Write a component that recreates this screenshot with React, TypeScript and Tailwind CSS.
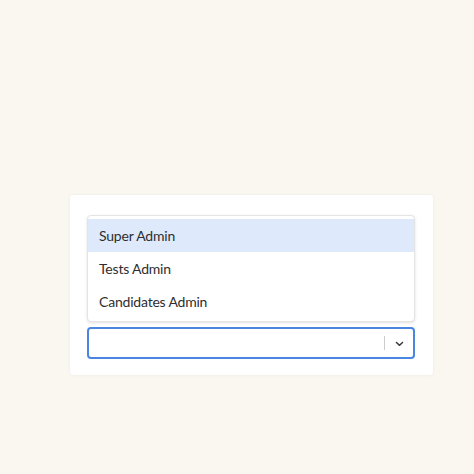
import React from "react";

export default function App() {
  const options = ["Super Admin", "Tests Admin", "Candidates Admin"];
  return (
    <div
      className="w-[474px] h-[474px] bg-[#faf6f0] pt-[195px] pl-[70px]"
      style={{ fontFamily: "Lato, 'Open Sans', sans-serif" }}
    >
      <div className="w-[363px] h-[180px] bg-white rounded-[3px] shadow-[0_0_3px_rgba(0,0,0,0.06)] pt-[20px] pl-[17px] pr-[18px]">
        <div className="flex flex-col gap-[5px]">
          <div className="rounded-[4px] border border-[#e4e4e4] bg-white shadow-[0_1px_3px_rgba(0,0,0,0.12)] py-[3px]">
            {options.map((o, i) => (
              <div
                key={o}
                className={`h-[33px] flex items-center px-[11px] text-[14px] tracking-[-0.2px] text-[#2e2e2e] ${
                  i === 0 ? "bg-[#deeafb]" : ""
                }`}
              >
                {o}
              </div>
            ))}
          </div>
          <div className="h-[32px] rounded-[4px] border-2 border-[#4a86e0] bg-white flex items-center justify-end">
            <div className="w-px h-[14px] bg-[#cccccc]" />
            <div className="w-[28px] flex items-center justify-center text-[#3a3a3a]">
              <svg width="13" height="13" viewBox="0 0 20 20" fill="currentColor">
                <path d="M4.516 7.548c0.436-0.446 1.043-0.481 1.576 0l3.908 3.747 3.908-3.747c0.533-0.481 1.141-0.446 1.574 0 0.436 0.445 0.408 1.197 0 1.615-0.406 0.418-4.695 4.502-4.695 4.502-0.217 0.223-0.502 0.335-0.787 0.335s-0.57-0.112-0.789-0.335c0 0-4.287-4.084-4.695-4.502s-0.436-1.17 0-1.615z" />
              </svg>
            </div>
          </div>
        </div>
      </div>
    </div>
  );
}
